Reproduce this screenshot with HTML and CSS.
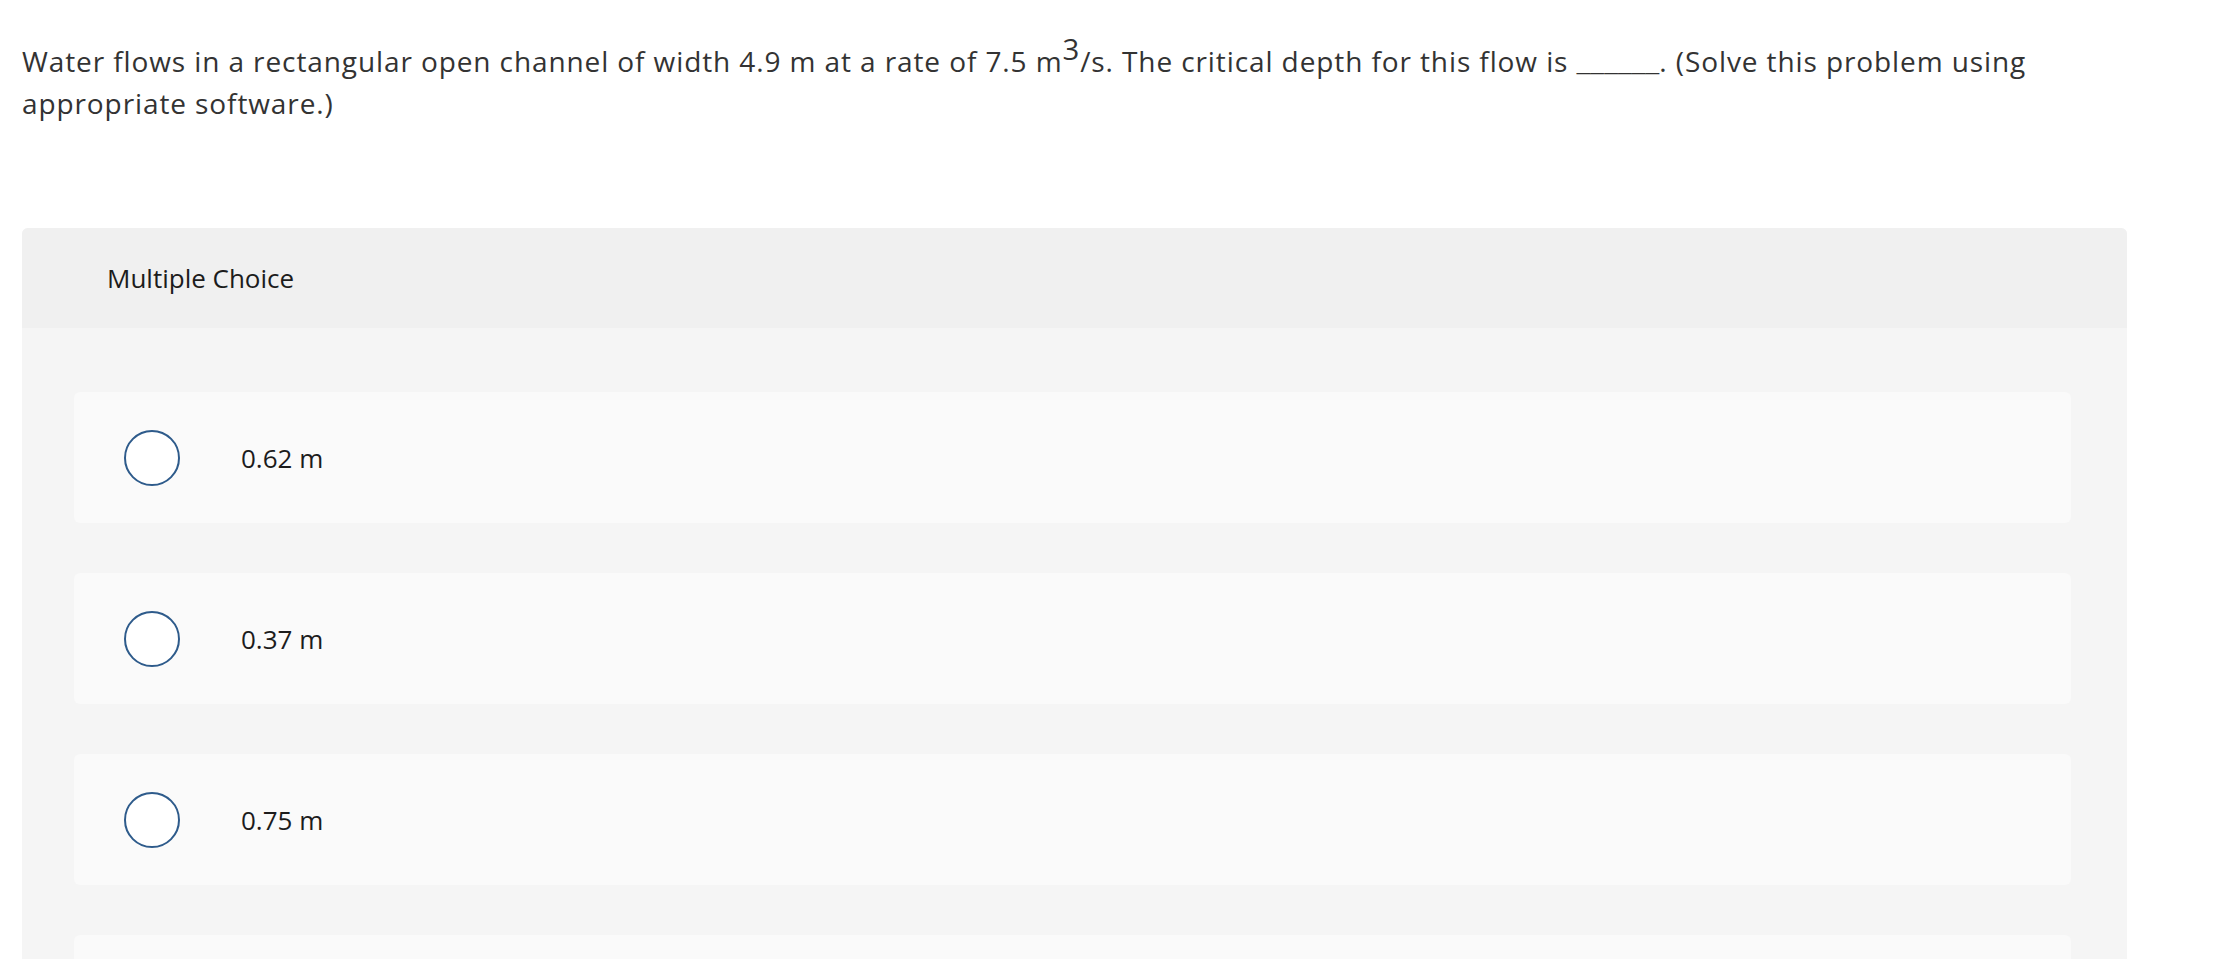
FILE: index.html
```html
<!DOCTYPE html>
<html lang="en">
<head>
<meta charset="utf-8">
<title>Multiple Choice</title>
<link rel="stylesheet" href="styles.css">
</head>
<body>
<div class="page">
  <p class="question">Water flows in a rectangular open channel of width 4.9 m at a rate of 7.5 m<sup class="sup">3</sup>/s. The critical depth for this flow is <span class="blank">______</span>. (Solve this problem using appropriate software.)</p>
  <section class="panel">
    <div class="panel-header">Multiple Choice</div>
    <div class="options">
      <div class="option"><span class="radio"></span><span class="label">0.62 m</span></div>
      <div class="option"><span class="radio"></span><span class="label">0.37 m</span></div>
      <div class="option"><span class="radio"></span><span class="label">0.75 m</span></div>
      <div class="option"><span class="radio"></span><span class="label">0.48 m</span></div>
    </div>
  </section>
</div>
</body>
</html>
```
FILE: styles.css
```css
html, body {
  margin: 0;
  padding: 0;
  background: #ffffff;
}
body {
  font-family: "Open Sans", Lato, sans-serif;
}
.page {
  padding: 40px 0 0 22px;
  width: 2105px;
}
.question {
  margin: 0 0 104px 0;
  font-size: 28px;
  line-height: 42px;
  letter-spacing: 0.9px;
  color: #333333;
}
.sup {
  font-size: 1.05em;
  line-height: 0;
  vertical-align: 0.42em;
}
.blank {
  font-family: "Liberation Mono", monospace;
  font-size: 23px;
  line-height: 0;
  letter-spacing: 0;
}
.panel {
  background: #f5f5f5;
  border-radius: 6px 6px 0 0;
  overflow: hidden;
  padding-bottom: 60px;
}
.panel-header {
  height: 100px;
  background: #f0f0f0;
  display: flex;
  align-items: center;
  padding-left: 85px;
  font-size: 26px;
  color: #1c1c1c;
}
.options {
  display: flex;
  flex-direction: column;
  gap: 50px;
  padding: 64px 56px 0 52px;
}
.option {
  height: 131px;
  background: #fafafa;
  border-radius: 6px;
  display: flex;
  align-items: center;
  padding-left: 50px;
}
.radio {
  width: 56px;
  height: 56px;
  box-sizing: border-box;
  border: 2px solid #2e5b8b;
  border-radius: 50%;
  background: #ffffff;
  flex: none;
}
.label {
  margin-left: 61px;
  font-size: 26px;
  color: #1c1c1c;
}
```
